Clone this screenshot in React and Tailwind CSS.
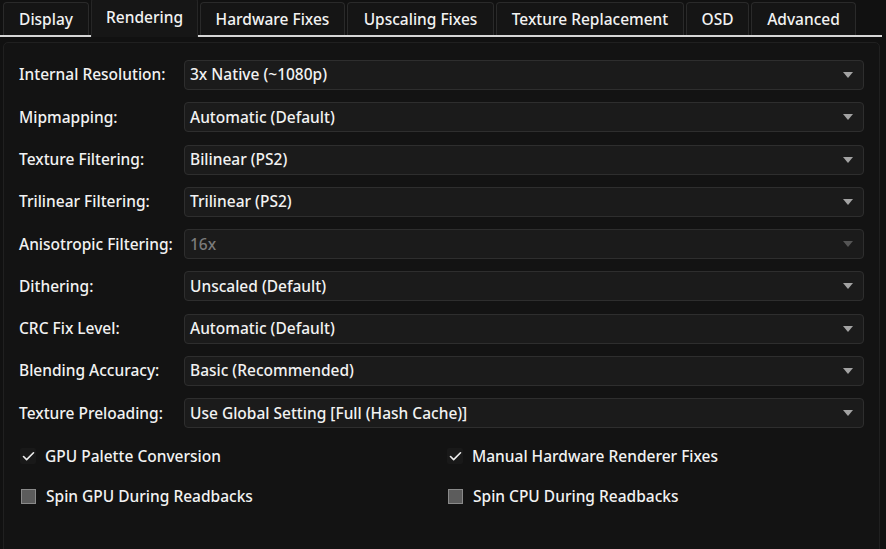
import { Check } from 'lucide-react'

const tabs = [
  { name: 'Display', w: 'w-[86px]' },
  { name: 'Rendering', w: 'w-[107px]', active: true },
  { name: 'Hardware Fixes', w: 'w-[145px]' },
  { name: 'Upscaling Fixes', w: 'w-[147px]' },
  { name: 'Texture Replacement', w: 'w-[188px]' },
  { name: 'OSD', w: 'w-[63px]' },
  { name: 'Advanced', w: 'w-[105px]' },
]

const settings = [
  { label: 'Internal Resolution:', value: '3x Native (~1080p)' },
  { label: 'Mipmapping:', value: 'Automatic (Default)' },
  { label: 'Texture Filtering:', value: 'Bilinear (PS2)' },
  { label: 'Trilinear Filtering:', value: 'Trilinear (PS2)' },
  { label: 'Anisotropic Filtering:', value: '16x', disabled: true },
  { label: 'Dithering:', value: 'Unscaled (Default)' },
  { label: 'CRC Fix Level:', value: 'Automatic (Default)' },
  { label: 'Blending Accuracy:', value: 'Basic (Recommended)' },
  { label: 'Texture Preloading:', value: 'Use Global Setting [Full (Hash Cache)]' },
]

const checks = [
  { label: 'GPU Palette Conversion', checked: true },
  { label: 'Manual Hardware Renderer Fixes', checked: true },
  { label: 'Spin GPU During Readbacks', checked: false },
  { label: 'Spin CPU During Readbacks', checked: false },
]

function ComboBox({ value, disabled }) {
  return (
    <div className="flex h-[30px] flex-1 items-center justify-between rounded-[4px] border border-[#2e2e2e] bg-[#1b1b1b] pl-[5px] pr-[10px]">
      <span className={disabled ? 'text-[#7a7a7a]' : 'text-[#f2f2f2]'}>{value}</span>
      <svg width="10" height="6" viewBox="0 0 10 6">
        <path d="M0 0 L10 0 L5 6 Z" fill={disabled ? '#555555' : '#a3a3a3'} />
      </svg>
    </div>
  )
}

function CheckRow({ label, checked }) {
  return (
    <div className="flex h-5 items-center">
      {checked ? (
        <span className="flex h-4 w-4 items-center justify-center rounded-[2px] bg-[#191919]">
          <Check size={15} strokeWidth={2.6} className="text-[#ececec]" />
        </span>
      ) : (
        <span className="ml-[1px] mr-[1px] h-[15px] w-[15px] border border-[#8a8a8a] bg-[#5c5c5c]" />
      )}
      <span className="ml-[9px] text-[#f2f2f2]">{label}</span>
    </div>
  )
}

export default function App() {
  return (
    <div
      className="h-[549px] w-[886px] overflow-hidden bg-[#111111] text-[15.5px] font-medium text-[#f2f2f2]"
      style={{ fontFamily: '"Noto Sans", "Open Sans", sans-serif' }}
    >
      <div className="flex h-[37px] w-[882px] items-end gap-[2px] border-b-2 border-[#d6d6d6] pl-[3px]">
        {tabs.map((t) =>
          t.active ? (
            <div
              key={t.name}
              className={`${t.w} relative -mb-[2px] flex h-[39px] items-center justify-center rounded-t-[4px] border border-b-0 border-[#262626] bg-[#161616] pb-[1px]`}
            >
              {t.name}
            </div>
          ) : (
            <div
              key={t.name}
              className={`${t.w} flex h-[33px] items-center justify-center rounded-t-[4px] border border-b-0 border-[#2a2a2a] bg-[#151515] pt-[2px]`}
            >
              {t.name}
            </div>
          )
        )}
      </div>

      <div className="ml-[3px] mt-[5px] h-[520px] w-[877px] rounded-[5px] border border-[#202020] bg-[#131313] px-[15px] pt-[17px]">
        <div className="flex flex-col gap-[12.3px]">
          {settings.map((s) => (
            <div key={s.label} className="flex items-center">
              <span className="w-[165px] shrink-0">{s.label}</span>
              <ComboBox value={s.value} disabled={s.disabled} />
            </div>
          ))}
        </div>

        <div className="mt-[18px] grid grid-cols-[427px_1fr] gap-y-[20px] pl-[1px]">
          {checks.map((c) => (
            <CheckRow key={c.label} label={c.label} checked={c.checked} />
          ))}
        </div>
      </div>
    </div>
  )
}
